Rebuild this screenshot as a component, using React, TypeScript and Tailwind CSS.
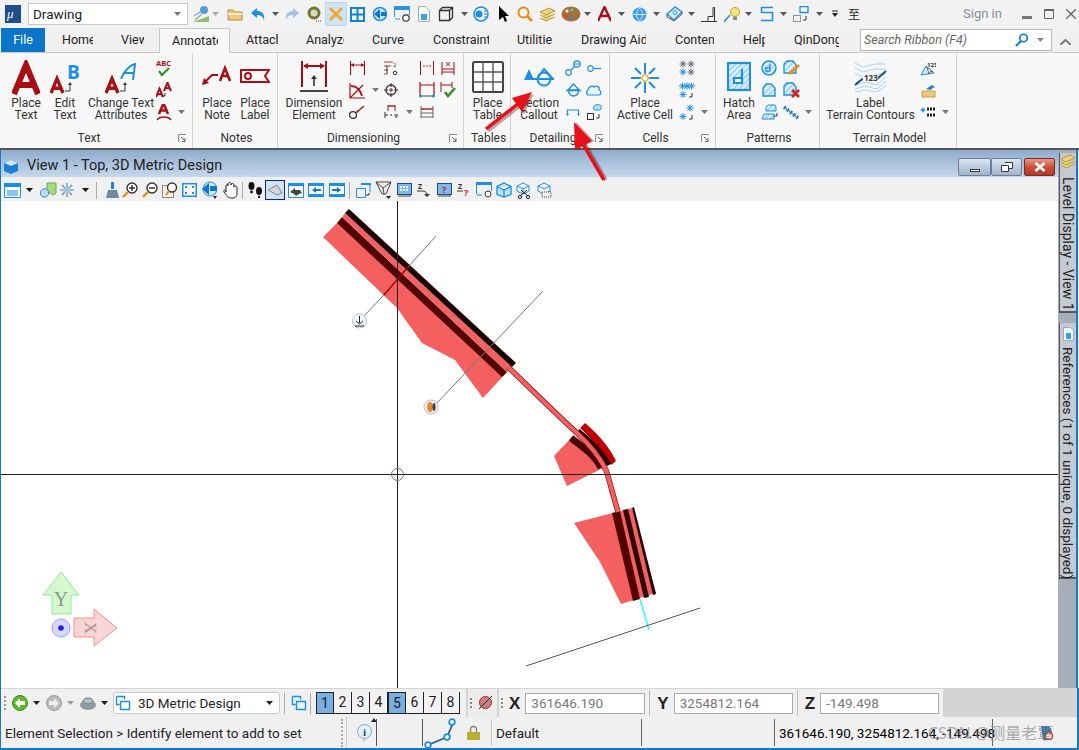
import type { ReactNode } from "react";

const BLUE = "#1b8fe3";
const RED = "#a80f14";

function S({ w = 16, h = 16, c = "", children }: { w?: number; h?: number; c?: string; children?: ReactNode }) {
  return (
    <svg width={w} height={h} viewBox={`0 0 ${w} ${h}`} className={`shrink-0 block ${c}`}>
      {children}
    </svg>
  );
}

function Drop({ c = "", fill = "#555" }: { c?: string; fill?: string }) {
  return (
    <S w={7} h={4} c={c}>
      <path d="M0 0h7L3.500 4z" fill={fill} />
    </S>
  );
}

function Launcher() {
  return (
    <S w={9} h={9}>
      <path d="M.5 8V.5H8" fill="none" stroke="#888" />
      <path d="M3 3l4 4M7 4v3.500H4" fill="none" stroke="#666" />
    </S>
  );
}

function Big({ icon, a, b, c = "" }: { icon: ReactNode; a: string; b: string; c?: string }) {
  return (
    <div className={`flex flex-col items-center shrink-0 ${c}`}>
      <div className="h-[37px] flex justify-center">{icon}</div>
      <div className="text-[12px] leading-[12px] whitespace-nowrap text-center">{a}</div>
      <div className="text-[12px] leading-[12px] whitespace-nowrap text-center">{b}</div>
    </div>
  );
}

function Col({ c = "", a, b, d }: { c?: string; a?: ReactNode; b?: ReactNode; d?: ReactNode }) {
  return (
    <div className={`flex flex-col gap-[2px] -mt-[2px] shrink-0 ${c}`}>
      <div className="h-[20px] flex items-center justify-center">{a}</div>
      <div className="h-[20px] flex items-center justify-center">{b}</div>
      <div className="h-[20px] flex items-center justify-center">{d}</div>
    </div>
  );
}

function Group({ c, label, launcher, children }: { c: string; label: string; launcher?: boolean; children: ReactNode }) {
  return (
    <div className={`flex flex-col shrink-0 border-r border-[#d4d4d4] ${c}`}>
      <div className="flex h-[78px] pt-[7px]">{children}</div>
      <div className={`flex items-center h-[14px] ${launcher ? "" : "pl-[3px]"}`}>
        <span className="flex-1 text-center text-[12px] leading-[14px]">{label}</span>
        {launcher && (
          <span className="w-[14px]">
            <Launcher />
          </span>
        )}
      </div>
    </div>
  );
}

function SmallA({ x, y, s = 8, color = RED }: { x: number; y: number; s?: number; color?: string }) {
  return (
    <path
      d={`M${x} ${y}L${x + s * 0.5} ${y - s * 1.2}L${x + s} ${y}M${x + s * 0.2} ${y - s * 0.4}H${x + s * 0.8}`}
      fill="none"
      stroke={color}
      strokeWidth={s * 0.28}
    />
  );
}

function Gear({ x, y, color }: { x: number; y: number; color: string }) {
  return (
    <path
      d={`M${x} ${y - 3.500}v7M${x - 3.500} ${y}h7M${x - 2.500} ${y - 2.500}l5 5M${x + 2.500} ${y - 2.500}l-5 5`}
      stroke={color}
      strokeWidth="1"
    />
  );
}

function TitleRow() {
  return (
    <div className="flex items-center h-[28px] bg-[#f2f2f2] shrink-0">
      <S w={16} h={18} c="ml-[5px]">
        <rect width="16" height="18" fill="#1c4f8a" />
        <text x="2" y="13" fill="#fff" fontSize="13" fontStyle="italic" fontFamily="Liberation Serif">μ</text>
      </S>
      <div className="ml-[7px] w-[160px] h-[22px] bg-white border border-[#c8c8c8] flex items-center pl-[4px] pr-[6px] text-[13.500px] justify-between">
        Drawing
        <Drop fill="#777" />
      </div>
      <S w={17} h={18} c="ml-[5px]">
        <path d="M0 17L16 11V17z" fill="#8cc06c" />
        <path d="M1 11l6-4M2 15l7-6" stroke="#9ab" strokeWidth="1.500" />
        <circle cx="11" cy="5" r="4" fill="#5a9bd6" />
      </S>
      <Drop c="ml-[2px]" fill="#aaa" />
      <S w={16} h={14} c="ml-[8px]">
        <path d="M1 3h5l1 2h8v8H1z" fill="#f1c779" stroke="#b58a3a" />
        <path d="M1 7h14" stroke="#fff1c8" strokeWidth="2" />
      </S>
      <S w={14} h={14} c="ml-[8px]">
        <path d="M6 1L0 6l6 5V8c3 0 6 1 7 5 1-6-2-9-7-9z" fill={BLUE} />
      </S>
      <Drop c="ml-[7px]" />
      <S w={13} h={14} c="ml-[7px]">
        <path d="M7 1l6 5-6 5V8C4 8 1 9 0 13c-1-6 2-9 7-9z" fill="#9cc3e6" />
      </S>
      <S w={14} h={16} c="ml-[8px]">
        <circle cx="7" cy="7" r="6.500" fill="#77762f" />
        <circle cx="7" cy="7" r="3.500" fill="#d9d9c0" />
        <path d="M9 15h1m1 0h1m1 0h1" stroke="#444" />
      </S>
      <div className="ml-[4px] w-[22px] h-[24px] bg-[#cfe3f6] border border-[#b9d5ee] flex items-center justify-center">
        <S w={16} h={16}>
          <path d="M2 2l12 12M14 2L2 14" stroke="#f0a830" strokeWidth="3" />
        </S>
      </div>
      <S w={15} h={15} c="ml-[3px]">
        <path d="M1 1h13v13H1zM1 7.500h13M7.500 1v13" fill="none" stroke="#0f83dc" strokeWidth="2" />
      </S>
      <S w={15} h={16} c="ml-[7px]">
        <circle cx="8" cy="8" r="6.500" fill="#cfe6f8" stroke={BLUE} strokeWidth="1.500" />
        <path d="M8 3L2 8l6 5V3zM9 6h5v4H9z" fill="#0f78cc" />
      </S>
      <S w={16} h={16} c="ml-[7px]">
        <path d="M.5 11V1.500h15V9M6 13H1" fill="none" stroke="#2a93e0" />
        <path d="M0 0h16v4H0z" fill="#2a93e0" />
        <circle cx="12" cy="12" r="3.200" fill="#fff" stroke="#333" strokeWidth="1.200" />
      </S>
      <S w={12} h={16} c="ml-[8px]">
        <path d="M.5.5h7l4 4v11H.5z" fill="#f4f8fb" stroke="#9ab" />
        <path d="M3 8h6v6H3z" fill="#3ba0e6" />
      </S>
      <S w={16} h={16} c="ml-[8px]">
        <path d="M4.500 1.500h10v10l-3 3h-10v-10zM1.500 4.500h10v10M11.500 4.500l3-3" fill="none" stroke="#333" strokeWidth="1.300" />
      </S>
      <Drop c="ml-[7px]" />
      <S w={16} h={16} c="ml-[5px]">
        <circle cx="8" cy="8" r="7" fill="none" stroke={BLUE} strokeWidth="1.500" />
        <circle cx="6" cy="8" r="3.500" fill={BLUE} />
        <path d="M11 5h3M11 8h3M11 11h3" stroke={BLUE} />
      </S>
      <S w={10} h={16} c="ml-[10px]">
        <path d="M0 0l10 10H6l2 5-2 1-2-5-4 3z" fill="#000" />
      </S>
      <S w={16} h={16} c="ml-[8px]">
        <circle cx="6.500" cy="6.500" r="5" fill="none" stroke="#ee8a14" strokeWidth="2" />
        <path d="M10 10l5 5" stroke="#ee8a14" strokeWidth="2.500" />
      </S>
      <S w={15} h={15} c="ml-[7px]">
        <path d="M0 5l9-4 6 3-9 4zM0 8l6 3 9-4M0 11l6 3 9-4" fill="#e9d27a" stroke="#b59a38" />
      </S>
      <S w={20} h={16} c="ml-[6px]">
        <ellipse cx="10" cy="8" rx="9.500" ry="7.500" fill="#a5713a" />
        <circle cx="6" cy="5" r="1.600" fill="#eee" />
        <circle cx="11" cy="4" r="1.600" fill="#3d9" />
        <circle cx="5" cy="10" r="1.600" fill="#e33" />
        <circle cx="10" cy="12" r="1.600" fill="#38e" />
      </S>
      <Drop c="ml-[3px]" />
      <S w={13} h={16} c="ml-[7px]">
        <path d="M0 15L6.500 1 13 15M2.500 10h8" fill="none" stroke={RED} strokeWidth="2.400" />
      </S>
      <Drop c="ml-[7px]" />
      <S w={15} h={15} c="ml-[7px]">
        <circle cx="7.500" cy="7.500" r="7" fill="#3ba0e6" />
        <path d="M1 7.500h13M7.500 1c-4 4-4 9 0 13M7.500 1c4 4 4 9 0 13" fill="none" stroke="#cfe6f8" />
      </S>
      <Drop c="ml-[6px]" />
      <S w={17} h={16} c="ml-[6px]">
        <path d="M1 8l8-7 7 5-8 8z" fill="#d6ecfb" stroke="#2a93e0" strokeWidth="1.400" />
        <path d="M1 8v3l7 4 8-7V6" fill="none" stroke="#555" />
        <circle cx="9" cy="6.500" r="2" fill="none" stroke="#2a93e0" />
      </S>
      <Drop c="ml-[5px]" />
      <S w={16} h={15} c="ml-[6px]">
        <path d="M0 14.500h16M7 14.500v-5h5v-9h1.500v14" fill="none" stroke="#333" />
      </S>
      <S w={16} h={17} c="ml-[7px]">
        <circle cx="11" cy="6" r="4.500" fill="#f8e47a" stroke="#b59a38" />
        <path d="M9 11h4v3H9z" fill="#888" />
        <path d="M0 16L6 9" stroke={BLUE} strokeWidth="1.500" />
      </S>
      <Drop c="ml-[5px]" />
      <S w={14} h={16} c="ml-[8px]">
        <path d="M13 1.500H1.500v5h11v8H1" fill="none" stroke={BLUE} strokeWidth="1.600" />
      </S>
      <Drop c="ml-[6px]" />
      <S w={16} h={16} c="ml-[6px]">
        <path d="M7 .5h8v6H7z" fill="none" stroke={BLUE} strokeWidth="1.300" />
        <path d="M.5 9.500h7v6h-7z" fill="none" stroke="#333" strokeDasharray="1 1" />
        <path d="M10 14h3v-4" fill="none" stroke="#333" />
      </S>
      <Drop c="ml-[7px]" />
      <S w={6} h={8} c="ml-[9px]">
        <path d="M0 1h6" stroke="#222" />
        <path d="M0 3h6L3 7z" fill="#222" />
      </S>
      <span className="ml-[10px] text-[12px] leading-none font-['Noto_Sans_CJK_SC',sans-serif]">至</span>
      <span className="ml-[103px] text-[13px] text-[#8a8f96]">Sign in</span>
      <S w={10} h={6} c="ml-[20px] mt-[6px]">
        <path d="M0 2h10v3H0z" fill="#777" />
      </S>
      <S w={10} h={10} c="ml-[12px]">
        <path d="M.5 1.500h9v8h-9z" fill="none" stroke="#666" />
        <path d="M0 0h10v2H0z" fill="#666" />
      </S>
      <S w={10} h={10} c="ml-[12px]">
        <path d="M0 0l10 10M10 0L0 10" stroke="#666" strokeWidth="1.300" />
      </S>
    </div>
  );
}

const tabs = [
  { t: "Home", c: "ml-[17px] w-[31px]" },
  { t: "View", c: "ml-[28px] w-[23px]" },
];
const tabs2 = [
  { t: "Attach", c: "ml-[16px] w-[32px]" },
  { t: "Analyze", c: "ml-[28px] w-[38px]" },
  { t: "Curve", c: "ml-[28px] w-[32px]" },
  { t: "Constraint", c: "ml-[29px] w-[56px]" },
  { t: "Utilities", c: "ml-[28px] w-[35px]" },
  { t: "Drawing Aid", c: "ml-[29px] w-[65px]" },
  { t: "Content", c: "ml-[29px] w-[39px]" },
  { t: "Help", c: "ml-[29px] w-[22px]" },
  { t: "QinDong", c: "ml-[29px] w-[45px]" },
];

function TabRow() {
  return (
    <div className="flex items-end h-[25px] bg-[#f0f0f0] border-b border-[#c8c8c8] shrink-0 text-[12.500px]">
      <div className="ml-[1px] w-[44px] h-[24px] bg-[#0a76c8] text-white flex items-center justify-center">File</div>
      {tabs.map((x) => (
        <span key={x.t} className={`h-[24px] leading-[24px] overflow-hidden whitespace-nowrap ${x.c}`}>{x.t}</span>
      ))}
      <div className="ml-[15px] w-[71px] h-[25px] -mb-[1px] bg-[#f7f7f7] border border-b-0 border-[#c8c8c8] pl-[12px] leading-[24px] overflow-hidden whitespace-nowrap">
        <span className="block w-[46px] overflow-hidden">Annotate</span>
      </div>
      {tabs2.map((x) => (
        <span key={x.t} className={`h-[24px] leading-[24px] overflow-hidden whitespace-nowrap ${x.c}`}>{x.t}</span>
      ))}
      <div className="ml-[21px] mb-[1px] w-[192px] h-[22px] bg-white border border-[#b8b8b8] flex items-center pl-[3px] pr-[7px] italic text-[#666] text-[12.500px] justify-between">
        Search Ribbon (F4)
        <span className="flex items-center gap-[9px]">
          <S w={13} h={14}>
            <circle cx="8.500" cy="5" r="3.800" fill="none" stroke="#0f78cc" strokeWidth="1.600" />
            <path d="M6 8l-5 5" stroke="#0f78cc" strokeWidth="2" />
          </S>
          <Drop fill="#888" />
        </span>
      </div>
      <S w={11} h={6} c="ml-[8px] mb-[7px]">
        <path d="M0 6l5.500-5L11 6" fill="none" stroke="#777" strokeWidth="2" />
      </S>
    </div>
  );
}

function Hatch() {
  return (
    <defs>
      <pattern id="hb" width="4" height="4" patternUnits="userSpaceOnUse" patternTransform="rotate(-45)">
        <rect width="4" height="4" fill="#e2f1fc" />
        <rect width="4" height="2" fill="#a6d5f5" />
      </pattern>
    </defs>
  );
}

function Ribbon() {
  return (
    <div className="flex h-[95px] bg-[#f7f7f7] shrink-0 text-[#333]">
      <Group c="w-[193px]" label="Text" launcher>
        <Big c="w-[52px]" a="Place" b="Text" icon={
          <S w={28} h={37}>
            <path d="M2 34L14 5 26 34M6 25h16" fill="none" stroke={RED} strokeWidth="6" />
          </S>
        } />
        <Big c="w-[26px]" a="Edit" b="Text" icon={
          <S w={30} h={37}>
            <SmallA x={1} y={33} s={12} />
            <text x="17" y="19" fontSize="19" fontWeight="bold" fill={BLUE} fontFamily="Open Sans">B</text>
            <path d="M15 31h5v-7" fill="none" stroke="#333" />
            <path d="M18 25l2-3 2 3z" fill="#333" />
          </S>
        } />
        <Big c="ml-[8px] w-[70px]" a="Change Text" b="Attributes" icon={
          <S w={32} h={37}>
            <SmallA x={1} y={33} s={12} />
            <path d="M15 31h5v-7" fill="none" stroke="#333" />
            <path d="M18 25l2-3 2 3z" fill="#333" />
            <path d="M16 19c3-8 9-14 14-15l-2 16M18 13h11" fill="none" stroke={BLUE} strokeWidth="2" />
          </S>
        } />
        <Col c="w-[16px]" a={
          <S w={16} h={18}>
            <text x="0" y="7" fontSize="7.500" fontWeight="bold" fill={RED} fontFamily="Open Sans">ABC</text>
            <path d="M3 12l3 4 7-7" fill="none" stroke="#3d8f2d" strokeWidth="2.200" />
          </S>
        } b={
          <S w={16} h={16}>
            <SmallA x={0} y={15} s={7} />
            <SmallA x={8} y={9} s={7} />
            <path d="M5 14h4v-3" fill="none" stroke="#333" />
          </S>
        } d={
          <S w={16} h={17}>
            <SmallA x={3} y={10} s={9} />
            <path d="M1 16c3-4 11-4 14 0" fill="none" stroke={RED} strokeWidth="1.400" />
          </S>
        } />
        <Col c="ml-[6px] w-[7px]" d={<Drop fill="#777" />} />
      </Group>
      <Group c="w-[85px]" label="Notes">
        <Big c="ml-[5px] w-[38px]" a="Place" b="Note" icon={
          <S w={32} h={37}>
            <path d="M2 24l9-9h6" fill="none" stroke={RED} strokeWidth="2" />
            <path d="M1 25l2-7 5 5z" fill={RED} />
            <path d="M19 21l5-13 5 13M21 16h7" fill="none" stroke={RED} strokeWidth="2.600" />
          </S>
        } />
        <Big c="w-[38px]" a="Place" b="Label" icon={
          <S w={30} h={37}>
            <path d="M1 10h28l-4 6 4 6H1z" fill="none" stroke={RED} strokeWidth="2" />
            <circle cx="8" cy="16" r="3" fill="none" stroke={RED} strokeWidth="2" />
          </S>
        } />
      </Group>
      <Group c="w-[186px]" label="Dimensioning" launcher>
        <Big c="ml-[3px] w-[66px]" a="Dimension" b="Element" icon={
          <S w={28} h={37}>
            <path d="M2 1v26M26 1v26M4 6h20" fill="none" stroke={RED} strokeWidth="2" />
            <path d="M3 6l5-3v6zM25 6l-5-3v6z" fill={RED} />
            <path d="M14 26v-9" stroke="#333" strokeWidth="1.600" />
            <path d="M11 19l3-4 3 4z" fill="#333" />
            <path d="M0 31h28" stroke="#444" strokeWidth="2" />
          </S>
        } />
        <Col c="w-[20px]" a={
          <S w={15} h={14}>
            <path d="M.5 0v14M14.500 0v14" stroke={RED} strokeWidth="1.200" />
            <path d="M1 4h13" stroke={RED} />
            <path d="M1 4l3-2v4zM14 4l-3-2v4z" fill={RED} />
          </S>
        } b={
          <S w={17} h={17}>
            <path d="M1 1v15h15M1 16L14 3" fill="none" stroke={RED} strokeWidth="1.200" />
            <path d="M2 4c5 0 9 3 11 10" fill="none" stroke={RED} strokeWidth="1.800" />
          </S>
        } d={
          <S w={16} h={14}>
            <circle cx="4" cy="10" r="3.400" fill="none" stroke="#333" strokeWidth="1.300" />
            <path d="M8 7l7-6" stroke={RED} strokeWidth="1.300" />
            <path d="M7 8l1-3 2 2z" fill={RED} />
          </S>
        } />
        <Col c="w-[16px]" b={<Drop fill="#777" />} />
        <Col c="w-[16px]" a={
          <S w={14} h={17}>
            <path d="M0 2h9M0 6h7M0 10h4M0 14h3" stroke="#a33" fill="none" />
            <path d="M3 6v8" stroke="#333" />
            <text x="9" y="7" fontSize="6" fill="#333" fontFamily="Open Sans">2</text>
            <circle cx="11" cy="13" r="1.800" fill="none" stroke="#333" />
          </S>
        } b={
          <S w={14} h={14}>
            <circle cx="7" cy="7" r="5" fill="none" stroke="#333" strokeWidth="1.300" />
            <path d="M7 0v4M7 10v4M0 7h4M10 7h4" stroke="#333" />
            <path d="M5 7h4M7 5v4" stroke={RED} />
          </S>
        } d={
          <S w={15} h={15}>
            <path d="M4 1h7" stroke={RED} strokeWidth="1.300" />
            <path d="M4 0v6M11 0v6" stroke={RED} />
            <path d="M1 7v6M1 10h3M6 10h2M10 10h2M13 9v3h-2" stroke="#333" fill="none" />
          </S>
        } />
        <Col c="w-[20px]" d={<Drop fill="#777" />} />
        <Col c="w-[16px]" a={
          <S w={14} h={14}>
            <path d="M.5 0v14M13.500 0v14" stroke={RED} />
            <path d="M3 5h2M6 5h2M9 5h2" stroke="#c33" />
          </S>
        } b={
          <S w={16} h={16}>
            <path d="M1 0v14M15 0v14M1 3h14" stroke={RED} strokeWidth="1.200" />
            <path d="M1 14h14" stroke="#444" />
            <circle cx="1.500" cy="14" r="1.500" fill={BLUE} />
            <circle cx="14.500" cy="14" r="1.500" fill={BLUE} />
          </S>
        } d={
          <S w={14} h={12}>
            <path d="M1 0v12M13 0v12M1 3h12M1 7h12M1 11h12" stroke="#666" fill="none" />
            <path d="M1 3h12" stroke={RED} />
          </S>
        } />
        <Col c="w-[26px]" a={
          <S w={14} h={14}>
            <path d="M1 1v13M13 1v13M1 8h12M1 11h12" stroke={RED} />
            <path d="M5 1l4 4M9 1L5 5" stroke="#d22" />
          </S>
        } b={
          <S w={16} h={16}>
            <path d="M1 0v10M12 0v6M1 3h11" stroke={RED} />
            <path d="M5 10l3 4 7-8" fill="none" stroke="#3d8f2d" strokeWidth="2.600" />
          </S>
        } />
      </Group>
      <Group c="w-[47px]" label="Tables">
        <Big c="w-[47px]" a="Place" b="Table" icon={
          <S w={32} h={33}>
            <rect x="1" y="2" width="30" height="30" rx="1.500" fill="#fff" stroke="#444" strokeWidth="2" />
            <path d="M11 2v30M21 2v30M1 12h30M1 22h30" stroke="#555" strokeWidth="1.400" />
          </S>
        } />
      </Group>
      <Group c="w-[99px]" label="Detailing" launcher>
        <Big c="ml-[3px] w-[50px]" a="Section" b="Callout" icon={
          <S w={34} h={37}>
            <path d="M2 20L7 9l5 11z" fill={BLUE} />
            <path d="M10 19H32M15 19l7-10 9 10" fill="none" stroke={BLUE} strokeWidth="2" />
            <circle cx="22" cy="19" r="6.500" fill="none" stroke={BLUE} strokeWidth="2" />
          </S>
        } />
        <Col c="w-[18px]" a={
          <S w={16} h={16}>
            <circle cx="3.500" cy="12.500" r="2.800" fill="none" stroke={BLUE} strokeWidth="1.200" />
            <path d="M6 10l4-4" stroke={BLUE} strokeWidth="1.200" />
            <circle cx="12" cy="4" r="3.200" fill="none" stroke={BLUE} strokeWidth="1.200" />
            <path d="M9 4h6" stroke={BLUE} />
          </S>
        } b={
          <S w={15} h={15}>
            <path d="M7.500 1L13 7H2z" fill="#fff" stroke={BLUE} strokeWidth="1.400" />
            <path d="M2.500 8a5 5 0 0 0 10 0" fill="none" stroke={BLUE} strokeWidth="1.400" />
            <path d="M0 7.500h15" stroke={BLUE} strokeWidth="1.500" />
          </S>
        } d={
          <S w={14} h={7}>
            <path d="M1.500 6V1h11v5" fill="none" stroke={BLUE} strokeWidth="1.200" />
            <path d="M0 5h3L1.500 7zM11 5h3l-1.500 2z" fill={BLUE} />
          </S>
        } />
        <Col c="ml-[3px] w-[18px]" a={
          <S w={14} h={7}>
            <circle cx="3.500" cy="3.500" r="2.800" fill="none" stroke={BLUE} strokeWidth="1.200" />
            <path d="M6 3.500h8" stroke={BLUE} strokeWidth="1.200" />
          </S>
        } b={
          <S w={16} h={14}>
            <path d="M3 12c-3 0-3-4-1-5 0-3 4-5 6-3 3-2 6 0 5 3 3 1 2 5 0 5z" fill="#e8f4fd" stroke={BLUE} strokeWidth="1.200" />
          </S>
        } d={
          <S w={15} h={16}>
            <path d="M8 6c-2 0-2-2-1-3 0-2 3-3 4-2 3-1 4 2 3 3 0 2-1 2-2 2z" fill="#bfe0f8" stroke={BLUE} />
            <rect x=".5" y="9.500" width="6" height="6" fill="none" stroke="#333" />
            <path d="M9 14h3v-4" fill="none" stroke="#333" />
          </S>
        } />
      </Group>
      <Group c="w-[106px]" label="Cells" launcher>
        <Big c="w-[70px]" a="Place" b="Active Cell" icon={
          <S w={28} h={37}>
            <path d="M14 3v11M14 22v11M0 18h10M18 18h10M4 8l6 6M24 8l-6 6M4 28l6-6M24 28l-6-6" stroke={BLUE} strokeWidth="2" />
            <path d="M14 14l4 4-4 4-4-4z" fill="#fff" stroke="#f0a830" strokeWidth="1.400" />
          </S>
        } />
        <Col c="w-[14px]" a={
          <S w={16} h={16}>
            <Gear x={4} y={4} color="#667" />
            <Gear x={12} y={4} color="#667" />
            <Gear x={4} y={12} color={BLUE} />
            <Gear x={12} y={12} color="#667" />
          </S>
        } b={
          <S w={16} h={17}>
            <Gear x={3.500} y={4} color={BLUE} />
            <Gear x={8} y={4} color={BLUE} />
            <Gear x={12.500} y={4} color={BLUE} />
            <Gear x={4} y={12.500} color={BLUE} />
            <path d="M10 15h3v-4" stroke="#333" fill="none" />
          </S>
        } d={
          <S w={16} h={17}>
            <Gear x={11} y={4} color={BLUE} />
            <Gear x={4} y={12.500} color={BLUE} />
            <path d="M10 15h3v-4" stroke="#333" fill="none" />
          </S>
        } />
        <Col c="ml-[7px] w-[7px]" d={<Drop fill="#777" />} />
      </Group>
      <Group c="w-[104px]" label="Patterns">
        <Big c="w-[46px]" a="Hatch" b="Area" icon={
          <S w={24} h={32}>
            <Hatch />
            <rect x="1" y="3" width="22" height="27" fill="url(#hb)" stroke={BLUE} strokeWidth="2.200" />
            <path d="M15 9v14H7v-5h8" fill="#fff" stroke={BLUE} strokeWidth="2.200" />
          </S>
        } />
        <Col c="w-[14px]" a={
          <S w={16} h={16}>
            <circle cx="8" cy="8" r="7" fill="url(#hb)" stroke={BLUE} strokeWidth="1.400" />
            <path d="M9 4v7H5V8h4" fill="#fff" stroke={BLUE} strokeWidth="1.300" />
          </S>
        } b={
          <S w={14} h={14}>
            <path d="M1 13V5l3-4h5l4 4v8z" fill="url(#hb)" stroke={BLUE} strokeWidth="1.400" />
          </S>
        } d={
          <S w={17} h={16}>
            <path d="M5 7V3l2-2h7l1 2v4z" fill="url(#hb)" stroke={BLUE} />
            <path d="M1 15l2-5h10v5z" fill="url(#hb)" stroke={BLUE} />
            <path d="M13 12h3V9" stroke="#333" fill="none" />
          </S>
        } />
        <Col c="ml-[6px] w-[18px]" a={
          <S w={17} h={16}>
            <path d="M1 13V4l3-3h6l3 4v8z" fill="url(#hb)" stroke={BLUE} strokeWidth="1.300" />
            <path d="M6 14l10-9" stroke="#f08a14" strokeWidth="3" />
          </S>
        } b={
          <S w={17} h={16}>
            <path d="M1 13V4l3-3h6l3 4v8z" fill="url(#hb)" stroke={BLUE} strokeWidth="1.300" />
            <path d="M9 8l7 7M16 8l-7 7" stroke="#d82020" strokeWidth="2.800" />
          </S>
        } d={
          <S w={16} h={16}>
            <path d="M1 3l14 11" stroke={BLUE} strokeWidth="4" strokeDasharray="2 2" />
            <path d="M1 3l14 11" stroke="#456" />
          </S>
        } />
        <Col c="ml-[5px] w-[7px]" d={<Drop fill="#777" />} />
      </Group>
      <Group c="w-[137px]" label="Terrain Model">
        <Big c="ml-[1px] w-[99px]" a="Label" b="Terrain Contours" icon={
          <S w={33} h={32}>
            <path d="M1 3l8 4 12-3 11 0M1 8l8 4 12-3 11 0M1 13l8 4 12-3 11 0M1 25l10-3 12 3 9-8M1 29l10-3 12 3 9-8M1 32l10-2 12 2 9-6" fill="none" stroke="#a8d3f2" />
            <path d="M1 25c3-2 5-5 8-6h14l9-8" fill="none" stroke="#1c4f8a" strokeWidth="2" />
            <rect x="9" y="13" width="15" height="9" fill="#f7f7f7" />
            <text x="10" y="21" fontSize="8" fontWeight="bold" fill="#333" fontFamily="Open Sans">123</text>
          </S>
        } />
        <Col c="w-[16px]" a={
          <S w={16} h={15}>
            <path d="M1 14l5-9 8 7z" fill="#cfe6f8" stroke={BLUE} />
            <path d="M7 6l2 7 2-3 2 1z" fill="#fff" stroke="#333" strokeWidth=".7" />
            <text x="7" y="6" fontSize="6" fontWeight="bold" fill="#333" fontFamily="Open Sans">123</text>
          </S>
        } b={
          <S w={16} h={15}>
            <path d="M2 8h13v6H2z" fill="#f1c779" stroke="#c9a050" />
            <path d="M6 6l6-4 3 2-5 3z" fill="#2a7fd0" />
          </S>
        } d={
          <S w={16} h={13}>
            <path d="M3 1l1 2 2 1-2 1-1 2-1-2-2-1 2-1z" fill={BLUE} />
            <path d="M7 3h8M7 9h8" stroke="#222" strokeWidth="3" strokeDasharray="2 1" />
          </S>
        } />
        <Col c="ml-[6px] w-[7px]" d={<Drop fill="#777" />} />
      </Group>
    </div>
  );
}

function ViewToolbar() {
  return (
    <div className="flex items-center h-[24px] pt-[2px] bg-[#f0f0f0] shrink-0">
      <S w={17} h={15} c="ml-[3px]">
        <path d="M.5 1.500h16v13H.5z" fill="#fff" stroke={BLUE} />
        <path d="M0 0h17v4H0z" fill={BLUE} />
        <path d="M3 7h11v6H3z" fill="#8cc4ee" />
      </S>
      <Drop c="ml-[5px]" fill="#111" />
      <S w={17} h={16} c="ml-[7px]">
        <path d="M7 1h9v10l-3 2-6-4z" fill="#a6dc7c" stroke="#6aa548" />
        <circle cx="4.500" cy="11" r="4.200" fill="#bcdcf6" stroke={BLUE} />
      </S>
      <S w={14} h={14} c="ml-[3px]">
        <path d="M7 0v14M0 7h14M2 2l10 10M12 2L2 12" stroke="#6a7f8f" strokeWidth="1.200" />
        <circle cx="7" cy="7" r="3.600" fill="#9fc7e5" />
      </S>
      <Drop c="ml-[8px]" fill="#111" />
      <div className="ml-[7px] w-px h-[17px] bg-[#aaa]" />
      <S w={16} h={17} c="ml-[8px]">
        <path d="M6 0h3v7H6z" fill="#2a7fd0" />
        <path d="M3 8h9l2 8H1z" fill="#6d8aa3" />
      </S>
      <ZoomIcon c="ml-[1px]" sign="plus" />
      <ZoomIcon c="ml-[4px]" sign="minus" />
      <S w={16} h={16} c="ml-[4px]">
        <path d="M.5 3.500h11v12H.5z" fill="none" stroke="#222" strokeDasharray="1 1" />
        <circle cx="10" cy="5.500" r="4.500" fill="#fff" stroke="#333" strokeWidth="1.400" />
        <path d="M7 9l-3 4" stroke="#ee8a14" strokeWidth="2" />
      </S>
      <S w={15} h={14} c="ml-[4px]">
        <rect x=".75" y=".75" width="13.500" height="12.500" fill="#fff" stroke={BLUE} strokeWidth="1.500" />
        <path d="M3 3h2v2H3zM10 3h2v2h-2zM3 9h2v2H3zM10 9h2v2h-2z" fill={BLUE} />
      </S>
      <S w={16} h={18} c="ml-[4px]">
        <circle cx="9" cy="8" r="7" fill="#cfe6f8" stroke={BLUE} />
        <path d="M8 2L1 8l7 6zM9 5h7v5H9z" fill="#0f78cc" />
        <path d="M12 15h4l-2 3z" fill="#222" />
      </S>
      <S w={17} h={17} c="ml-[5px]">
        <path d="M4 9V4c0-2 2-2 2 0V2c0-2 3-2 3 0v1c0-2 3-2 3 0v2c0-2 3-1 3 1v5c0 4-2 5-5 5-4 0-5-2-8-6-1-2 1-3 2 0z" fill="#fff" stroke="#222" />
      </S>
      <div className="ml-[3px] w-px h-[17px] bg-[#aaa]" />
      <S w={15} h={16} c="ml-[5px]">
        <ellipse cx="3.500" cy="4" rx="3" ry="4" fill="#111" />
        <ellipse cx="11" cy="9" rx="3" ry="4" fill="#111" />
        <circle cx="3.500" cy="10" r="1.400" fill="#111" />
        <circle cx="11" cy="15" r="1.200" fill="#111" />
      </S>
      <div className="ml-[2px] w-[20px] h-[20px] bg-[#cfe3f6] border border-[#0a2a78] flex items-center justify-center">
        <S w={16} h={12}>
          <path d="M1 6L10 1l5 8-5 2z" fill="#d5d5d5" stroke="#888" />
        </S>
      </div>
      <S w={16} h={15} c="ml-[3px]">
        <path d="M.5 1.500h15v13H.5z" fill="#fff" stroke={BLUE} />
        <path d="M0 0h16v3H0z" fill={BLUE} />
        <path d="M2 9l5-4v2h5l2 3-3 1-3 2-2-2z" fill="#444" />
      </S>
      <WinArrow c="ml-[4px]" d="M4 7.500l4-3v2h5v2H8v2z" />
      <WinArrow c="ml-[5px]" d="M12 7.500l-4-3v2H3v2h5v2z" />
      <div className="ml-[4px] w-px h-[17px] bg-[#aaa]" />
      <S w={15} h={15} c="ml-[6px]">
        <path d="M.5 5.500h9v9h-9z" fill="none" stroke={BLUE} />
        <path d="M5 .5h9v9" fill="none" stroke={BLUE} />
        <path d="M10 12h3v-2" fill="none" stroke="#333" />
        <path d="M5 0h10v2H5z" fill={BLUE} />
      </S>
      <S w={17} h={18} c="ml-[4px]">
        <path d="M1 1h15l-5 12H7zM1 1l7 6 8-6M8 7l1 6" fill="#eee" stroke="#444" />
        <path d="M11 15h5l-2.500 3z" fill="#222" />
      </S>
      <S w={15} h={14} c="ml-[5px]">
        <rect x=".5" y=".5" width="14" height="11" fill="#7db9ec" stroke="#1c4f8a" />
        <path d="M3 3h2v2H3zm3 0h2v2H6zm3 0h2v2H9zM3 6h2v2H3zm3 0h2v2H6zm3 0h2v2H9z" fill="#fff" />
        <path d="M1 13h13" stroke="#444" />
      </S>
      <S w={13} h={15} c="ml-[5px]">
        <text x="1" y="6" fontSize="7" fontWeight="bold" fill="#333" fontFamily="Open Sans">Z</text>
        <path d="M0 8h6c3 0 4 2 4 5" fill="none" stroke="#333" />
        <path d="M7 11h6l-3 3z" fill="#333" />
      </S>
      <S w={15} h={15} c="ml-[7px]">
        <rect x=".5" y=".5" width="14" height="11" fill="#7db9ec" stroke="#1c4f8a" />
        <text x="5" y="10" fontSize="9" fontWeight="bold" fill="#c22" fontFamily="Open Sans">?</text>
        <path d="M1 13h13" stroke="#444" />
      </S>
      <S w={14} h={15} c="ml-[5px]">
        <text x="1" y="6" fontSize="7" fontWeight="bold" fill="#333" fontFamily="Open Sans">Z</text>
        <path d="M0 8h6" stroke="#333" />
        <text x="7" y="13" fontSize="9" fontWeight="bold" fill="#c22" fontFamily="Open Sans">?</text>
      </S>
      <S w={16} h={16} c="ml-[5px]">
        <path d="M.5 12V1.500h15V9M6 13H1" fill="none" stroke={BLUE} />
        <path d="M0 0h16v3H0z" fill={BLUE} />
        <circle cx="12" cy="12" r="3" fill="#fff" stroke="#333" />
      </S>
      <S w={16} h={16} c="ml-[4px]">
        <path d="M8 1l7 3.500v8L8 15l-7-2.500v-8zM1 4.500L8 8l7-3.500M8 8v7" fill="#bfe0f8" stroke={BLUE} strokeWidth="1.300" />
      </S>
      <S w={17} h={17} c="ml-[3px]">
        <path d="M8 1l6 3v5l-6 3-6-3V4zM2 4l6 3 6-3M8 7v5" fill="#fff" stroke={BLUE} />
        <path d="M6 8l7 6M12 8l-7 6" stroke="#222" />
        <circle cx="5" cy="15" r="1.600" fill="none" stroke="#222" />
        <circle cx="13" cy="15" r="1.600" fill="none" stroke="#222" />
      </S>
      <S w={16} h={16} c="ml-[4px]">
        <path d="M8 1l6 3v5l-6 3-6-3V4zM2 4l6 3 6-3" fill="#fff" stroke={BLUE} />
        <path d="M6 10h9v5H6z" fill="#fff" stroke="#333" strokeDasharray="1 1" />
      </S>
    </div>
  );
}

function ZoomIcon({ c, sign }: { c: string; sign: "plus" | "minus" }) {
  return (
    <S w={16} h={16} c={c}>
      <circle cx="10" cy="6" r="5" fill="#fff" stroke="#333" strokeWidth="1.400" />
      <path d="M7 6h6" stroke="#333" strokeWidth="1.500" />
      {sign === "plus" && <path d="M10 3v6" stroke="#333" strokeWidth="1.500" />}
      <path d="M6 10l-5 5" stroke="#ee8a14" strokeWidth="2.400" />
    </S>
  );
}

function WinArrow({ c, d }: { c: string; d: string }) {
  return (
    <S w={16} h={14} c={c}>
      <rect x=".5" y=".5" width="15" height="13" fill="#fff" stroke={BLUE} />
      <path d="M0 0h16v3H0zM0 11h16v3H0z" fill={BLUE} />
      <path d={d} fill="#0f78cc" transform="translate(0 -.5)" />
    </S>
  );
}

const ROAD = "M508 367C530 388 556 414 578 434 590 445 600 458 606 470 610 482 612 492 618 512";

function Canvas() {
  return (
    <svg width="1057" height="487" viewBox="1 201 1057 487" className="block bg-white shrink-0">
      {/* upper section */}
      <path d="M323 237L337 223 507 372 483 398 455 360 422 343 397 308z" fill="#f46060" />
      <path d="M337 223L342 217 507 372 502 377z" fill="#520000" />
      <path d="M342 217L345 213 512 367 507 372z" fill="#f46060" />
      <path d="M345 213L349 209 516 363 512 367z" fill="#1c0000" />
      <path d="M343 215L510 369" stroke="#3cc" strokeWidth=".6" strokeDasharray="3 14" />
      <path d="M384 295L408 267" stroke="#a00000" strokeWidth="1.400" />
      {/* middle section */}
      <path d="M554 456L572 437 603 468 567 486z" fill="#f46060" />
      <path d="M585 423C600 436 610 448 616 461L611 465C604 452 594 441 580 428z" fill="#c00000" />
      <path d="M578 431C591 441 602 452 609 465" fill="none" stroke="#260000" strokeWidth="5" />
      <path d="M571 438C583 447 596 456 601 468" fill="none" stroke="#4a0000" strokeWidth="7" />
      {/* lower section */}
      <path d="M574 523L632 508 656 593 621 604 600 562z" fill="#f46060" />
      <path d="M612 513L620 511 640 599 633 601z" fill="#520000" />
      <path d="M623 510L628 509 649 597 644 598z" fill="#300000" />
      <path d="M632 508L634 507 656 594 653 595z" fill="#1c0000" />
      {/* narrow road */}
      <path d={ROAD} fill="none" stroke="#8a1a20" strokeWidth="5.500" />
      <path d={ROAD} fill="none" stroke="#f46060" strokeWidth="4" />
      <path d="M640 599L649 630" stroke="#2ff" strokeWidth="1.400" />
      <path d="M526 666L700 608" stroke="#555" />
      {/* section lines */}
      <path d="M364 316L384 295M408 267L436 236" stroke="#777" />
      <path d="M437 403L543 291" stroke="#777" />
      <circle cx="359.500" cy="321" r="7" fill="#f6f6ff" stroke="#bbc" />
      <path d="M359.500 316v7M356 321l3.500 3 3.500-3M355 326h9" fill="none" stroke="#222" />
      <circle cx="431" cy="407" r="7" fill="#eee" stroke="#bbc" />
      <ellipse cx="430" cy="407" rx="2.800" ry="5" fill="#e88a20" />
      <ellipse cx="434" cy="407" rx="1.600" ry="4" fill="#445" />
      {/* crosshair */}
      <path d="M397.500 201V688M0 474.500H1058" stroke="#222" />
      <circle cx="397.500" cy="474.500" r="6" fill="none" stroke="#777" />
      {/* triad */}
      <path d="M52 595H43L61 572 79 595H71V614H52z" fill="#d6f6d0" stroke="#86f586" />
      <text x="61" y="606" textAnchor="middle" fontSize="20" fontFamily="Liberation Serif" fill="#8a9a88">Y</text>
      <path d="M74 618H94V609L117 628 94 646V637H74z" fill="#f6d6d4" stroke="#ff8c8c" />
      <text x="91" y="634" textAnchor="middle" fontSize="17" fontFamily="Liberation Serif" fill="#a89090" transform="rotate(90 91 628)" >X</text>
      <circle cx="61" cy="628" r="9" fill="#d6d6fb" stroke="#a0a0f5" />
      <circle cx="61" cy="628" r="2.800" fill="#2222e0" />
    </svg>
  );
}

function ViewButton({ n, active }: { n: number; active?: boolean }) {
  return (
    <div
      className={`w-[18px] h-[22px] flex items-center justify-center border-r border-b border-[#222] text-[14px] ${
        active ? "bg-[#78aee0] border-l border-t border-[#4a7fb5]" : "bg-[#f2f2f2]"
      }`}
    >
      {n}
    </div>
  );
}

function CoordInput({ label, value, c, w }: { label: string; value: string; c: string; w: string }) {
  return (
    <div className={`flex items-center shrink-0 ${c}`}>
      <span className="text-[17px] font-bold leading-none font-['Liberation_Sans',sans-serif]">{label}</span>
      <div className={`ml-[5px] h-[21px] bg-white border border-[#aaa] flex items-center pl-[5px] text-[13.500px] text-[#777] ${w}`}>
        {value}
      </div>
    </div>
  );
}

function BottomToolbar() {
  return (
    <div className="flex items-end h-[29px] bg-[#d4d4d4] shrink-0">
      <div className="flex items-center h-[28px] bg-[#f0f0f0] w-[465px] shrink-0">
        <span className="ml-[3px] w-[2px] h-[14px] border-l-2 border-dotted border-[#999]" />
        <S w={16} h={16} c="ml-[6px]">
          <circle cx="8" cy="8" r="7.500" fill="#5cb82c" stroke="#3e8a1c" />
          <path d="M3 8l5-5v3h5v4H8v3z" fill="#fff" />
        </S>
        <Drop c="ml-[5px]" fill="#222" />
        <S w={16} h={16} c="ml-[6px]">
          <circle cx="8" cy="8" r="7.500" fill="#bbb" stroke="#999" />
          <path d="M13 8L8 3v3H3v4h5v3z" fill="#eee" />
        </S>
        <Drop c="ml-[5px]" fill="#999" />
        <S w={16} h={14} c="ml-[6px]">
          <ellipse cx="8" cy="9" rx="8" ry="5" fill="#8e9a9e" />
          <ellipse cx="8" cy="5" rx="5" ry="3" fill="#b3bcbf" stroke="#778" />
        </S>
        <Drop c="ml-[5px]" fill="#222" />
        <div className="ml-[5px] w-[167px] h-[22px] bg-white border border-[#ccc] rounded-[3px] flex items-center pl-[1px] pr-[6px] text-[13.500px]">
          <S w={16} h={16}>
            <path d="M1.500 1.500h8v3M1.500 1.500v8h3M5.500 6.500h9v8h-9z" fill="none" stroke={BLUE} strokeWidth="1.400" />
          </S>
          <span className="ml-[7px]">3D Metric Design</span>
          <Drop c="ml-auto" fill="#222" />
        </div>
        <div className="ml-[4px] w-px h-[21px] bg-[#aaa]" />
        <S w={16} h={16} c="ml-[6px]">
          <path d="M1.500 1.500h8v3M1.500 1.500v8h3M5.500 6.500h9v8h-9z" fill="none" stroke={BLUE} strokeWidth="1.400" />
        </S>
        <div className="ml-[3px] w-px h-[21px] bg-[#aaa]" />
        <div className="ml-[5px] flex">
          {[1, 2, 3, 4, 5, 6, 7, 8].map((n) => (
            <ViewButton key={n} n={n} active={n === 1 || n === 5} />
          ))}
        </div>
      </div>
      <div className="ml-[2px] flex items-center h-[28px] bg-[#ececec] w-[29px] shrink-0">
        <span className="ml-[2px] w-[2px] h-[10px] border-l-2 border-dotted border-[#888]" />
        <S w={15} h={16} c="ml-[6px]">
          <circle cx="7.500" cy="7.500" r="6" fill="#c98080" stroke="#a22" />
          <path d="M1 14L14 1" stroke="#222" />
        </S>
      </div>
      <div className="ml-[2px] flex items-center h-[28px] bg-[#f0f0f0] w-[444px] shrink-0">
        <span className="ml-[2px] w-[2px] h-[10px] border-l-2 border-dotted border-[#888]" />
        <CoordInput c="ml-[6px]" label="X" value="361646.190" w="w-[120px]" />
        <div className="ml-[4px] w-px h-[26px] bg-[#bbb]" />
        <CoordInput c="ml-[7px]" label="Y" value="3254812.164" w="w-[119px]" />
        <div className="ml-[4px] w-px h-[26px] bg-[#bbb]" />
        <CoordInput c="ml-[7px]" label="Z" value="-149.498" w="w-[119px]" />
      </div>
    </div>
  );
}

function StatusBar() {
  return (
    <div className="flex items-center h-[31px] bg-[#f0f0f0] shrink-0 leading-none">
      <span className="ml-[4px] mt-[2px] w-[336px] whitespace-nowrap text-[13.500px]">Element Selection &gt; Identify element to add to set</span>
      <span className="w-[2px] h-[28px] border-l-2 border-dotted border-[#aaa]" />
      <div className="ml-[3px] w-px h-[31px] bg-[#ccc]" />
      <S w={15} h={18} c="ml-[10px]">
        <circle cx="7.500" cy="7.500" r="7" fill="#e5f0fb" stroke="#7aa7d4" />
        <text x="7.500" y="12" textAnchor="middle" fontSize="11" fontWeight="bold" fill="#1c4f8a" fontFamily="Liberation Serif">i</text>
        <path d="M5 14l2 4 2-4z" fill="#9cc3e6" />
      </S>
      <div className="ml-[4px] relative w-px h-[27px] bg-[#555]">
        <span className="absolute -left-[5px] top-[-1px] w-0 h-0 border-x-[3px] border-x-transparent border-b-[4px] border-b-[#222]" />
      </div>
      <div className="ml-[45px] w-px h-[27px] bg-[#555]" />
      <S w={32} h={31} c="ml-[1px]">
        <path d="M4 28l19-8 7-16" fill="none" stroke="#2b5f98" strokeWidth="1.800" />
        <circle cx="4" cy="28" r="2.800" fill="#fff" stroke={BLUE} strokeWidth="1.800" />
        <circle cx="23" cy="20" r="2.800" fill="#fff" stroke={BLUE} strokeWidth="1.800" />
        <circle cx="28" cy="5" r="2.800" fill="#fff" stroke={BLUE} strokeWidth="1.800" />
      </S>
      <S w={13} h={15} c="ml-[11px]">
        <path d="M3.500 7V4.500c0-4 6-4 6 0V7" fill="none" stroke="#888" strokeWidth="1.400" />
        <rect y="7" width="13" height="8" fill="#b8b030" />
      </S>
      <div className="ml-[11px] w-px h-[27px] bg-[#ccc]" />
      <span className="ml-[4px] mt-[2px] w-[145px] text-[13.500px]">Default</span>
      <div className="w-px h-[27px] bg-[#666]" />
      <div className="ml-[132px] w-px h-[27px] bg-[#666]" />
      <span className="ml-[4px] mt-[2px] w-[213px] whitespace-nowrap text-[13.500px] text-black">361646.190, 3254812.164, -149.498</span>
      <div className="w-px h-[27px] bg-[#666]" />
      <S w={13} h={15} c="ml-[47px]">
        <path d="M1 1h8l3 6-2 8H3z" fill="#1c6fb8" />
        <circle cx="9" cy="11" r="3.500" fill="#fff" stroke="#d22" strokeWidth="1.400" />
      </S>
    </div>
  );
}

function Dock() {
  return (
    <div className="w-[20px] shrink-0 bg-[#a7aeb9] border-r-2 border-[#1878c0] flex flex-col pt-[3px] pl-[1px] gap-[10px] overflow-hidden">
      <div className="w-[17px] h-[160px] bg-[#c5cad2] border-b-2 border-l border-[#555] flex flex-col items-center pt-[1px]">
        <S w={14} h={14}>
          <path d="M0 5l9-4 5 3-9 4zM0 8l5 3 9-4M0 11l5 3 9-4" fill="#e9d27a" stroke="#b59a38" />
        </S>
        <span className="[writing-mode:vertical-rl] text-[14px] leading-[16px] mt-[9px] whitespace-nowrap">Level Display - View 1</span>
      </div>
      <div className="w-[17px] h-[256px] bg-[#c5cad2] border-b-2 border-l border-[#555] flex flex-col items-center pt-[4px]">
        <S w={11} h={14}>
          <path d="M.5.5h7l3 3v10H.5z" fill="#f4f8fb" stroke="#9ab" />
          <path d="M3 6h5v6H3z" fill="#3ba0e6" />
        </S>
        <span className="[writing-mode:vertical-rl] text-[13.500px] leading-[16px] mt-[6px] whitespace-nowrap">References (1 of 1 unique, 0 displayed)</span>
      </div>
    </div>
  );
}

function ViewWindow() {
  return (
    <div className="w-[1058px] shrink-0 flex flex-col border-l border-[#1878c0]">
      <div className="flex items-center h-[27px] pt-[6px] bg-gradient-to-b from-[#8faccc] to-[#c6d8ec] shrink-0">
        <S w={14} h={14} c="ml-[3px]">
          <path d="M7 0l7 3v8l-7 3-7-3V3z" fill="#1b7fd6" />
          <path d="M0 3l7 3 7-3-7-3z" fill="#cfe6f8" />
        </S>
        <span className="ml-[9px] text-[14.500px] leading-none text-[#222]">View 1 - Top, 3D Metric Design</span>
        <div className="ml-auto mr-[3px] flex">
          <div className="w-[33px] h-[18px] rounded-[2px] border border-[#6b7f96] bg-gradient-to-b from-[#dbe6f2] to-[#9fb4cc] flex items-end justify-center pb-[3px]">
            <span className="w-[10px] h-[3px] bg-white border border-[#333]" />
          </div>
          <div className="w-[31px] h-[18px] rounded-[2px] border border-[#6b7f96] bg-gradient-to-b from-[#dbe6f2] to-[#9fb4cc] flex items-center justify-center">
            <S w={12} h={10}>
              <path d="M4 .5h7.500v6H8M.5 3.500h7v6h-7z" fill="#fff" stroke="#333" />
            </S>
          </div>
          <div className="ml-[2px] w-[31px] h-[18px] rounded-[2px] border border-[#7a2a20] bg-gradient-to-b from-[#e89a88] via-[#c8503a] to-[#b03a28] flex items-center justify-center">
            <S w={12} h={10}>
              <path d="M1.500 1l9 8M10.500 1l-9 8" stroke="#fff" strokeWidth="2.600" />
            </S>
          </div>
        </div>
      </div>
      <ViewToolbar />
      <Canvas />
    </div>
  );
}

export default function App() {
  return (
    <div className="relative w-[1079px] h-[750px] overflow-hidden bg-[#f0f0f0] flex flex-col text-[#222] font-['Roboto','Noto_Sans',sans-serif]">
      <TitleRow />
      <TabRow />
      <Ribbon />
      <div className="h-[2px] bg-[#555] shrink-0" />
      <div className="flex flex-1 min-h-0">
        <ViewWindow />
        <Dock />
      </div>
      <div className="border-l border-[#1878c0] border-r-2 border-r-[#1878c0] border-b-2 border-b-[#1878c0] shrink-0">
        <BottomToolbar />
        <StatusBar />
      </div>

      {/* annotation arrows and watermark painted over the screenshot */}
      <svg width="1079" height="750" viewBox="0 0 1079 750" className="absolute inset-0 pointer-events-none">
        <path d="M488 131L521 105" stroke="#5a0000" strokeOpacity=".35" strokeWidth="3.500" />
        <path d="M534 94L524 114 514 100z" fill="#5a0000" fillOpacity=".35" />
        <path d="M486 129L519 103" stroke="#e8101a" strokeWidth="3.500" />
        <path d="M532 92L522 112 512 98z" fill="#e8101a" />
        <path d="M606 180L585 144" stroke="#5a0000" strokeOpacity=".35" strokeWidth="3.500" />
        <path d="M576 122L594 141 577 150z" fill="#5a0000" fillOpacity=".35" />
        <path d="M604 180L583 144" stroke="#e8101a" strokeWidth="3.500" />
        <path d="M574 122L592 141 575 150z" fill="#e8101a" />
      </svg>
      <span className="absolute left-[928px] top-[724px] text-[16px] leading-[18px] text-[#888]/70 whitespace-nowrap font-['Noto_Sans','Noto_Sans_CJK_SC',sans-serif]">CSDN @测量老覃</span>
    </div>
  );
}
